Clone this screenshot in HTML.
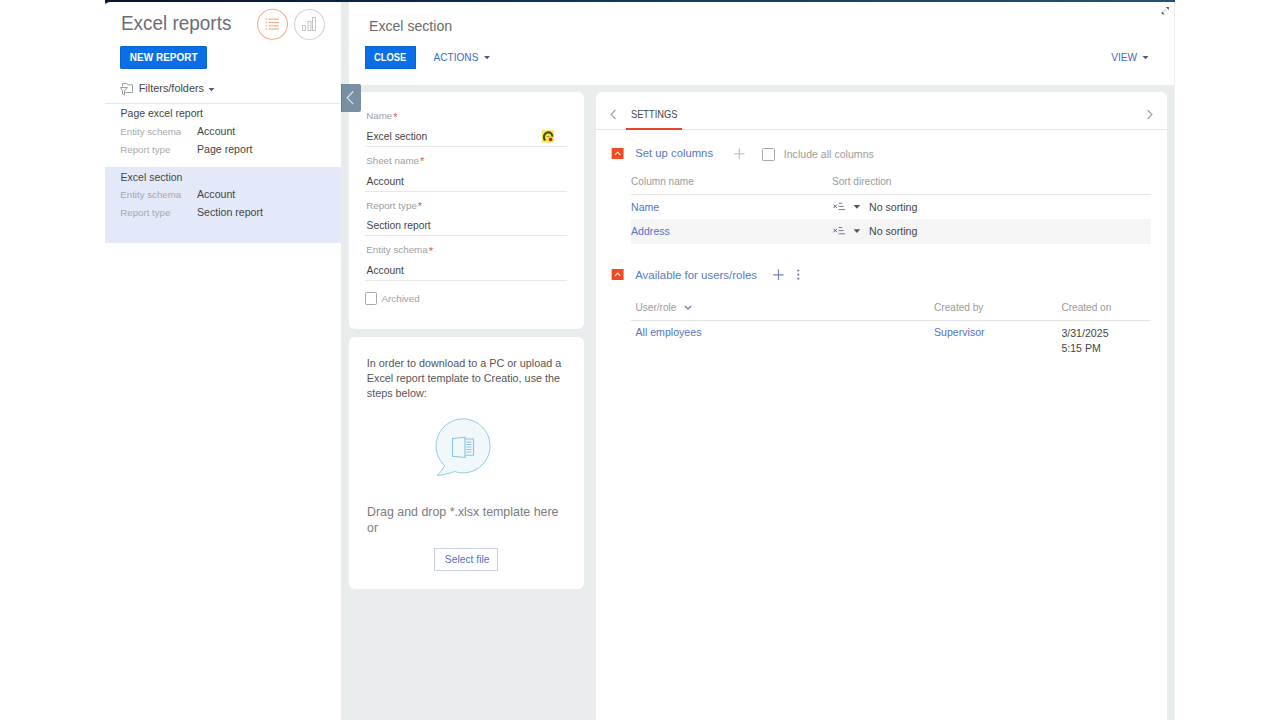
<!DOCTYPE html><html><head><meta charset="utf-8"><style>
html,body{margin:0;padding:0;width:1280px;height:720px;overflow:hidden;background:#fff;}
body{position:relative;font-family:"Liberation Sans",sans-serif;}
.t{position:absolute;white-space:nowrap;line-height:1;}
.r{position:absolute;box-sizing:border-box;}
svg{position:absolute;overflow:visible;}
</style></head><body>
<svg style="left:0;top:0" width="1" height="1"><path d="M105 0 H110 V2 Q106.5 2 105.5 4.5 Z" fill="#07152e"/><path d="M1175 0 H1170 V2 Q1173.5 2 1174.5 5 Z" fill="#215479"/></svg>
<div class="r" style="left:105px;top:0px;width:1070px;height:2px;background:linear-gradient(90deg,#07152e 0%,#0c2748 30%,#10395e 50%,#1a4a70 80%,#215479 100%);"></div>
<div class="r" style="left:341px;top:2px;width:834px;height:718px;background:#e8eced;"></div>
<div class="r" style="left:349px;top:2px;width:825px;height:83px;background:#fff;"></div>
<div class="r" style="left:1174px;top:2px;width:1px;height:718px;background:#eef0f2;"></div>
<div class="t" style="left:121.20px;top:13.96px;font-size:19.6px;color:#6a6d78;font-weight:normal;transform:scaleX(0.965);transform-origin:0 0;">Excel reports</div>
<div class="r" style="left:120px;top:46px;width:87px;height:23px;background:#0a6fe6;border-radius:2px;box-shadow:inset 0 0 0 1px #0c64d2;"></div>
<div class="t" style="left:129.80px;top:52.88px;font-size:10px;color:#fff;font-weight:bold;">NEW REPORT</div>
<svg style="left:0;top:0" width="1" height="1"><circle cx="272.5" cy="24.3" r="15" fill="none" stroke="#f4ae86" stroke-width="1.05"/><g fill="#f2ac82"><rect x="265.5" y="18.5" width="1.6" height="1.3"/><rect x="268.5" y="18.6" width="10.5" height="1.1"/><rect x="265.5" y="21.8" width="1.6" height="1.3"/><rect x="268.5" y="21.9" width="10.5" height="1.1"/><rect x="265.5" y="25.1" width="1.6" height="1.3"/><rect x="268.5" y="25.2" width="10.5" height="1.1"/><rect x="265.5" y="28.4" width="1.6" height="1.3"/><rect x="268.5" y="28.5" width="10.5" height="1.1"/></g><circle cx="309.5" cy="24.5" r="15" fill="none" stroke="#d4d4d4" stroke-width="1.1"/><g fill="none" stroke="#c4c4c4" stroke-width="1"><rect x="302.5" y="25.5" width="3" height="5"/><rect x="308" y="21.5" width="3" height="9"/><rect x="312.5" y="17.5" width="3" height="13"/></g></svg>
<svg style="left:0;top:0" width="1" height="1"><g fill="none" stroke="#9aa0a8" stroke-width="1"><path d="M122.5 86.5 V83.5 H126.8 L127.8 84.8 H132.5 V92.5 H125.5"/><path d="M120.5 87.5 H127.5 L124.5 91 V95 L122.5 94 V91 Z"/></g></svg>
<div class="t" style="left:138.70px;top:83.42px;font-size:10.9px;color:#444;font-weight:normal;">Filters/folders</div>
<svg style="left:0;top:0" width="1" height="1"><path d="M208.5 88 h6 l-3 3.2 z" fill="#4b5a7a"/></svg>
<div class="r" style="left:105px;top:103px;width:235px;height:1px;background:#e6e6e6;"></div>
<div class="t" style="left:120.60px;top:107.86px;font-size:10.5px;color:#444;font-weight:normal;">Page excel report</div>
<div class="t" style="left:120.30px;top:126.94px;font-size:9.7px;color:#a8a8a8;font-weight:normal;">Entity schema</div>
<div class="t" style="left:197.00px;top:126.18px;font-size:10.6px;color:#444;font-weight:normal;">Account</div>
<div class="t" style="left:120.30px;top:144.64px;font-size:9.7px;color:#a8a8a8;font-weight:normal;">Report type</div>
<div class="t" style="left:197.00px;top:143.88px;font-size:10.6px;color:#444;font-weight:normal;">Page report</div>
<div class="r" style="left:105px;top:167px;width:236px;height:76px;background:#e3e9f9;"></div>
<div class="t" style="left:120.60px;top:172.06px;font-size:10.5px;color:#444;font-weight:normal;">Excel section</div>
<div class="t" style="left:120.30px;top:190.14px;font-size:9.7px;color:#a8a8a8;font-weight:normal;">Entity schema</div>
<div class="t" style="left:197.00px;top:189.38px;font-size:10.6px;color:#444;font-weight:normal;">Account</div>
<div class="t" style="left:120.30px;top:207.84px;font-size:9.7px;color:#a8a8a8;font-weight:normal;">Report type</div>
<div class="t" style="left:197.00px;top:207.08px;font-size:10.6px;color:#444;font-weight:normal;">Section report</div>
<div class="t" style="left:369.00px;top:17.75px;font-size:15px;color:#6a6a6a;font-weight:normal;transform:scaleX(0.94);transform-origin:0 0;">Excel section</div>
<div class="r" style="left:365px;top:46px;width:51px;height:23px;background:#0a6fe6;border-radius:1px;box-shadow:inset 0 0 0 1px #0c64d2;"></div>
<div class="t" style="left:374.40px;top:52.55px;font-size:10.4px;color:#fff;font-weight:bold;transform:scaleX(0.9);transform-origin:0 0;">CLOSE</div>
<div class="t" style="left:433.50px;top:52.80px;font-size:10.1px;color:#3d6bc2;font-weight:normal;">ACTIONS</div>
<svg style="left:0;top:0" width="1" height="1"><path d="M484 56 h6 l-3 3.2 z" fill="#4b5a7a"/><path d="M1142.5 56 h6 l-3 3.2 z" fill="#4b5a7a"/></svg>
<div class="t" style="left:1111.20px;top:52.80px;font-size:10.1px;color:#3d6bc2;font-weight:normal;">VIEW</div>
<svg style="left:0;top:0" width="1" height="1"><path d="M1163.5 12 l3 -3" stroke="#999" stroke-width="0.7"/><path d="M1161.8 11.2 L1161.8 14.2 L1164.8 14.2 Z" fill="#555"/><path d="M1165.8 7 L1168.8 7 L1168.8 10 Z" fill="#555"/></svg>
<div class="r" style="left:349px;top:92px;width:235px;height:237px;background:#fff;border-radius:6px;"></div>
<div class="t" style="left:366.20px;top:111.05px;font-size:9.8px;color:#a0a0a0;font-weight:normal;">Name<span style="color:#e5553c;font-size:11px;margin-left:1px;line-height:1px;position:relative;top:1.5px;">*</span></div>
<div class="t" style="left:366.60px;top:131.53px;font-size:10.3px;color:#444;font-weight:normal;">Excel section</div>
<div class="r" style="left:365px;top:146px;width:202px;height:1px;background:#e8e8e8;"></div>
<div class="t" style="left:366.20px;top:155.80px;font-size:9.8px;color:#a0a0a0;font-weight:normal;">Sheet name<span style="color:#e5553c;font-size:11px;margin-left:1px;line-height:1px;position:relative;top:1.5px;">*</span></div>
<div class="t" style="left:366.60px;top:176.53px;font-size:10.3px;color:#444;font-weight:normal;">Account</div>
<div class="r" style="left:365px;top:190.5px;width:202px;height:1.0px;background:#e8e8e8;"></div>
<div class="t" style="left:366.20px;top:200.55px;font-size:9.8px;color:#a0a0a0;font-weight:normal;">Report type<span style="color:#e5553c;font-size:11px;margin-left:1px;line-height:1px;position:relative;top:1.5px;">*</span></div>
<div class="t" style="left:366.60px;top:221.33px;font-size:10.3px;color:#444;font-weight:normal;">Section report</div>
<div class="r" style="left:365px;top:235px;width:202px;height:1px;background:#e8e8e8;"></div>
<div class="t" style="left:366.20px;top:245.05px;font-size:9.8px;color:#a0a0a0;font-weight:normal;">Entity schema<span style="color:#e5553c;font-size:11px;margin-left:1px;line-height:1px;position:relative;top:1.5px;">*</span></div>
<div class="t" style="left:366.60px;top:265.53px;font-size:10.3px;color:#444;font-weight:normal;">Account</div>
<div class="r" style="left:365px;top:280px;width:202px;height:1px;background:#e8e8e8;"></div>
<svg style="left:0;top:0" width="1" height="1"><rect x="541.8" y="130.2" width="12" height="12.2" rx="1" fill="#f3e84c"/><path d="M545 140.5 C543.6 138 543.8 135.2 545.3 133.6 C547 131.8 550.2 132 551.6 134 C552.2 134.9 552.4 135.8 552.3 136.6" fill="none" stroke="#4a4812" stroke-width="2.1"/><path d="M546.6 136.4 h3" stroke="#8a8620" stroke-width="1"/><circle cx="550.6" cy="139.4" r="2.3" fill="#f5a030" opacity="0.6"/><circle cx="550.6" cy="139.4" r="1.6" fill="#d41010"/></svg>
<div class="r" style="left:364.5px;top:292px;width:12.5px;height:12.5px;border:1.3px solid #a8a8a8;border-radius:1.5px;"></div>
<div class="t" style="left:381.50px;top:294.05px;font-size:9.8px;color:#a0a0a0;font-weight:normal;">Archived</div>
<div class="r" style="left:349px;top:337px;width:235px;height:252px;background:#fff;border-radius:6px;"></div>
<div class="t" style="left:366.80px;top:358.01px;font-size:10.8px;color:#555;font-weight:normal;">In order to download to a PC or upload a</div>
<div class="t" style="left:366.80px;top:373.01px;font-size:10.8px;color:#555;font-weight:normal;">Excel report template to Creatio, use the</div>
<div class="t" style="left:366.80px;top:388.11px;font-size:10.8px;color:#555;font-weight:normal;">steps below:</div>
<svg style="left:0;top:0" width="1" height="1"><path d="M444.5 465.5 A27 27 0 1 1 454.5 471.5 C449 473.5 443 475 437 475.5 C440.5 472.5 443 469 444.5 465.5 Z" fill="#f1f8fc" stroke="#90cde3" stroke-width="1"/><g fill="none" stroke="#86c3dc" stroke-width="1.1"><path d="M452.5 438.5 L465 437.3 V457.5 L452.5 456.3 Z"/><path d="M465 439 H473.5 V455.3 H465"/><path d="M466.5 442 h5 M466.5 444.5 h5 M466.5 447 h5 M466.5 449.5 h5 M466.5 452 h5"/></g></svg>
<div class="t" style="left:367.00px;top:505.55px;font-size:12.4px;color:#7c7c7c;font-weight:normal;">Drag and drop *.xlsx template here</div>
<div class="t" style="left:367.00px;top:522.45px;font-size:12.4px;color:#7c7c7c;font-weight:normal;">or</div>
<div class="r" style="left:434px;top:548px;width:64px;height:23px;border:1px solid #c8d0e2;background:#fff;"></div>
<div class="t" style="left:444.80px;top:554.53px;font-size:10.3px;color:#4f73c2;font-weight:normal;">Select file</div>
<div class="r" style="left:596px;top:92px;width:571px;height:638px;background:#fff;border-radius:6px;"></div>
<svg style="left:0;top:0" width="1" height="1"><path d="M615.5 110 l-4.5 4.5 l4.5 4.5" fill="none" stroke="#a0a0a0" stroke-width="1.1"/><path d="M1147.5 110 l4.5 4.5 l-4.5 4.5" fill="none" stroke="#a0a0a0" stroke-width="1.1"/></svg>
<div class="t" style="left:630.80px;top:109.93px;font-size:10.3px;color:#444;font-weight:normal;transform:scaleX(0.9);transform-origin:0 0;">SETTINGS</div>
<div class="r" style="left:596px;top:129px;width:571px;height:1px;background:#e6e6e6;"></div>
<div class="r" style="left:626px;top:128px;width:56px;height:2px;background:#e8442c;"></div>
<svg style="left:0;top:0" width="1" height="1"><rect x="611.6" y="148.0" width="12" height="11" fill="#f04a22"/><path d="M614.9 154.8 l2.7 -2.6 l2.7 2.6" fill="none" stroke="#fff" stroke-width="1.1"/></svg>
<div class="t" style="left:635.20px;top:148.18px;font-size:11.3px;color:#5877c0;font-weight:normal;">Set up columns</div>
<svg style="left:0;top:0" width="1" height="1"><path d="M739.3 148.5 v10.5 M734 153.8 h10.5" stroke="#b8b8b8" stroke-width="1.1" fill="none"/></svg>
<div class="r" style="left:762px;top:148px;width:13px;height:13px;border:1.5px solid #a8a8a8;border-radius:1.5px;"></div>
<div class="t" style="left:783.75px;top:149.38px;font-size:10.6px;color:#9c9c9c;font-weight:normal;">Include all columns</div>
<div class="t" style="left:631.00px;top:176.50px;font-size:10.1px;color:#9a9a9a;font-weight:normal;">Column name</div>
<div class="t" style="left:832.00px;top:176.50px;font-size:10.1px;color:#9a9a9a;font-weight:normal;">Sort direction</div>
<div class="r" style="left:631px;top:194px;width:520px;height:1px;background:#e4e4e4;"></div>
<div class="r" style="left:631px;top:219px;width:520px;height:25px;background:#f5f5f5;"></div>
<div class="t" style="left:631.00px;top:201.98px;font-size:10.6px;color:#5474bf;font-weight:normal;">Name</div>
<svg style="left:0;top:0" width="1" height="1"><g stroke="#56647e" stroke-width="1" fill="none"><path d="M833.5 204.6 l3.4 3.4 M836.9 204.6 l-3.4 3.4"/></g><g stroke="#6f7d98" stroke-width="1" fill="none"><path d="M838.6 203.3 h3.6 M838.6 206.4 h5 M838.6 209.6 h6.4"/></g><path d="M853.6 205.1 h6.6 l-3.3 3.6 z" fill="#555"/></svg>
<div class="t" style="left:869.00px;top:201.98px;font-size:10.6px;color:#444;font-weight:normal;">No sorting</div>
<div class="t" style="left:631.00px;top:225.78px;font-size:10.6px;color:#5474bf;font-weight:normal;">Address</div>
<svg style="left:0;top:0" width="1" height="1"><g stroke="#56647e" stroke-width="1" fill="none"><path d="M833.5 228.8 l3.4 3.4 M836.9 228.8 l-3.4 3.4"/></g><g stroke="#6f7d98" stroke-width="1" fill="none"><path d="M838.6 227.5 h3.6 M838.6 230.6 h5 M838.6 233.8 h6.4"/></g><path d="M853.6 229.3 h6.6 l-3.3 3.6 z" fill="#555"/></svg>
<div class="t" style="left:869.00px;top:225.98px;font-size:10.6px;color:#444;font-weight:normal;">No sorting</div>
<svg style="left:0;top:0" width="1" height="1"><rect x="611.6" y="269.0" width="12" height="11" fill="#f04a22"/><path d="M614.9 275.8 l2.7 -2.6 l2.7 2.6" fill="none" stroke="#fff" stroke-width="1.1"/></svg>
<div class="t" style="left:635.20px;top:269.56px;font-size:11.45px;color:#5a7ac2;font-weight:normal;">Available for users/roles</div>
<svg style="left:0;top:0" width="1" height="1"><path d="M778.5 269.5 v10.5 M773.2 274.8 h10.5" stroke="#6f88c2" stroke-width="1.2" fill="none"/><circle cx="798.3" cy="270.5" r="1.1" fill="#6a7fae"/><circle cx="798.3" cy="274.6" r="1.1" fill="#6a7fae"/><circle cx="798.3" cy="278.7" r="1.1" fill="#6a7fae"/><path d="M685 306 l3 3 l3 -3" fill="none" stroke="#6a7fae" stroke-width="1.3"/></svg>
<div class="t" style="left:635.50px;top:303.00px;font-size:10.1px;color:#9a9a9a;font-weight:normal;">User/role</div>
<div class="t" style="left:934.00px;top:303.10px;font-size:10.1px;color:#9a9a9a;font-weight:normal;">Created by</div>
<div class="t" style="left:1061.40px;top:303.10px;font-size:10.1px;color:#9a9a9a;font-weight:normal;">Created on</div>
<div class="r" style="left:631px;top:320px;width:520px;height:1px;background:#e4e4e4;"></div>
<div class="t" style="left:635.50px;top:327.38px;font-size:10.6px;color:#5474bf;font-weight:normal;">All employees</div>
<div class="t" style="left:934.00px;top:327.18px;font-size:10.6px;color:#5474bf;font-weight:normal;">Supervisor</div>
<div class="t" style="left:1061.40px;top:327.78px;font-size:10.6px;color:#444;font-weight:normal;">3/31/2025</div>
<div class="t" style="left:1061.40px;top:343.13px;font-size:10.6px;color:#444;font-weight:normal;">5:15 PM</div>
<div class="r" style="left:341px;top:84px;width:20px;height:28px;background:#7890a2;border-radius:0 2px 2px 0;border-left:1px solid #d0573a;"></div>
<svg style="left:0;top:0" width="1" height="1"><path d="M353.2 91.5 l-6 6.3 l6 6.3" fill="none" stroke="#e4ebf0" stroke-width="1.1"/></svg>
</body></html>
